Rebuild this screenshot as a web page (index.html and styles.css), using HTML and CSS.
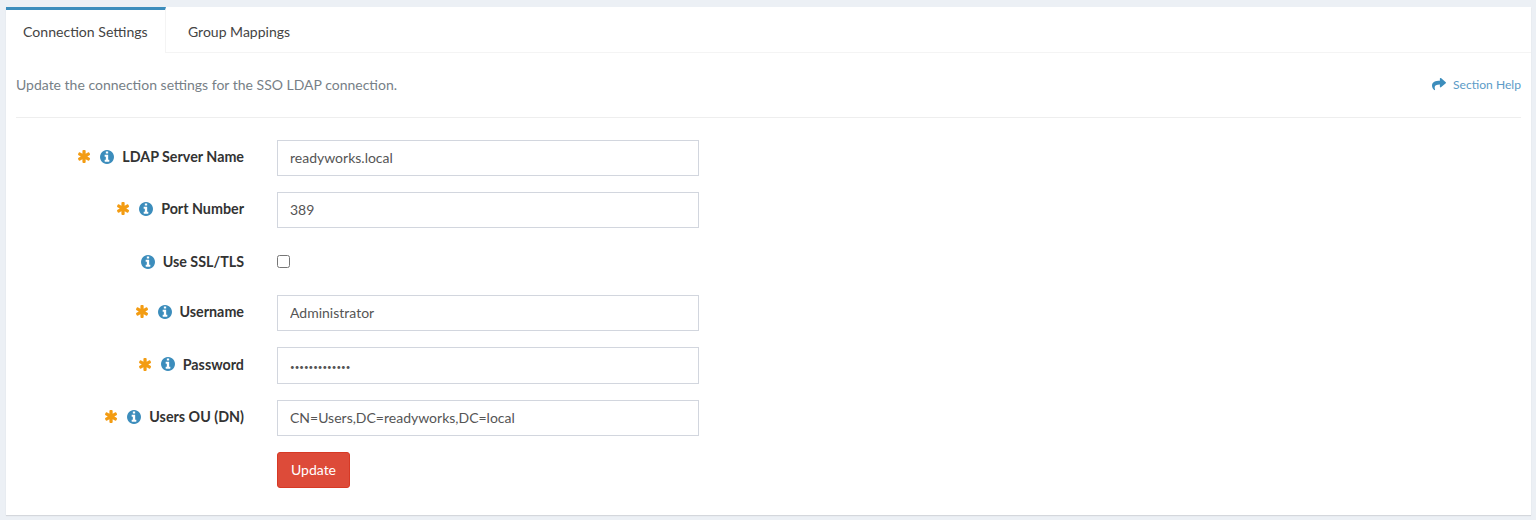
FILE: index.html
```html
<!DOCTYPE html>
<html lang="en">
<head>
<meta charset="utf-8">
<title>SSO LDAP Connection Settings</title>
<link rel="stylesheet" href="styles.css">
</head>
<body>
<svg class="defs" width="0" height="0" aria-hidden="true">
  <symbol id="i-info" viewBox="0 0 1536 1536"><path d="M1024 1248v-160q0-14-9-23t-23-9h-96v-512q0-14-9-23t-23-9h-320q-14 0-23 9t-9 23v160q0 14 9 23t23 9h96v320h-96q-14 0-23 9t-9 23v160q0 14 9 23t23 9h448q14 0 23-9t9-23zm-128-896v-160q0-14-9-23t-23-9h-192q-14 0-23 9t-9 23v160q0 14 9 23t23 9h192q14 0 23-9t9-23zm640 416q0 209-103 385.5t-279.5 279.5-385.5 103-385.5-103-279.5-279.5-103-385.5 103-385.5 279.5-279.5 385.5-103 385.5 103 279.5 279.5 103 385.5z"/></symbol>
  <symbol id="i-star" viewBox="58 122 1548 1548"><path d="M1546 1050q46 26 59.5 77.5t-12.5 97.5l-64 110q-26 46-77.5 59.5t-97.5-12.5l-266-153v307q0 52-38 90t-90 38h-128q-52 0-90-38t-38-90v-307l-266 153q-46 26-97.5 12.5t-77.5-59.5l-64-110q-26-46-12.5-97.5t59.5-77.5l266-154-266-154q-46-26-59.5-77.5t12.5-97.5l64-110q26-46 77.5-59.5t97.5 12.5l266 153v-307q0-52 38-90t90-38h128q52 0 90 38t38 90v307l266-153q46-26 97.5-12.5t77.5 59.5l64 110q26 46 12.5 97.5t-59.5 77.5l-266 154z"/></symbol>
  <symbol id="i-share" viewBox="0 0 512 512"><path d="M503.691 189.836L327.687 37.851C312.281 24.546 288 35.347 288 56.015v80.053C127.371 137.907 0 170.1 0 322.326c0 61.441 39.581 122.309 83.333 154.132 13.653 9.931 33.111-2.533 28.077-18.631C66.066 312.814 132.917 274.316 288 272.085V360c0 20.7 24.3 31.453 39.687 18.164l176.004-152c11.071-9.562 11.086-26.753 0-36.328z"/></symbol>
</svg>
<div class="card">
  <div class="tabs">
    <a class="tab tab-active">Connection Settings</a>
    <a class="tab">Group Mappings</a>
  </div>
  <div class="pane">
    <div class="intro">
      <p class="intro-text">Update the connection settings for the SSO LDAP connection.</p>
      <a class="help"><svg class="icon-share"><use href="#i-share"/></svg><span>Section Help</span></a>
    </div>
    <form class="form">
      <div class="row">
        <label class="label label-up"><svg class="icon-star"><use href="#i-star"/></svg><svg class="icon-info"><use href="#i-info"/></svg><span>LDAP Server Name</span></label>
        <input class="input" type="text" value="readyworks.local">
      </div>
      <div class="row">
        <label class="label label-up"><svg class="icon-star"><use href="#i-star"/></svg><svg class="icon-info"><use href="#i-info"/></svg><span>Port Number</span></label>
        <input class="input" type="text" value="389">
      </div>
      <div class="row row-check">
        <label class="label"><svg class="icon-info"><use href="#i-info"/></svg><span>Use SSL/TLS</span></label>
        <input class="check" type="checkbox">
      </div>
      <div class="row">
        <label class="label label-up"><svg class="icon-star"><use href="#i-star"/></svg><svg class="icon-info"><use href="#i-info"/></svg><span>Username</span></label>
        <input class="input" type="text" value="Administrator">
      </div>
      <div class="row">
        <label class="label label-up"><svg class="icon-star"><use href="#i-star"/></svg><svg class="icon-info"><use href="#i-info"/></svg><span>Password</span></label>
        <input class="input input-pass" type="password" value="readyworks123">
      </div>
      <div class="row">
        <label class="label label-up"><svg class="icon-star"><use href="#i-star"/></svg><svg class="icon-info"><use href="#i-info"/></svg><span>Users OU (DN)</span></label>
        <input class="input" type="text" value="CN=Users,DC=readyworks,DC=local">
      </div>
      <div class="row">
        <span class="label"></span>
        <button class="btn" type="button">Update</button>
      </div>
    </form>
  </div>
</div>
</body>
</html>
```
FILE: styles.css
```css
* { box-sizing: border-box; }
html, body { height: 100%; }
body {
  margin: 0;
  padding: 7px 5px 5px 6px;
  background: #ecf0f5;
  font-family: "Lato", "Noto Sans", sans-serif;
  font-size: 14px;
  color: #333;
  overflow: hidden;
}
.defs { position: absolute; }
.card {
  height: 508px;
  background: #fff;
  box-shadow: 0 1px 1px rgba(0,0,0,.1);
}
.tabs {
  display: flex;
  height: 46px;
  border-bottom: 1px solid #f4f4f4;
}
.tab {
  display: flex;
  align-items: center;
  padding: 3px 17px 0;
  color: #444;
  font-size: 14px;
}
.tab-active {
  width: 160px;
  height: 46px;
  padding: 0 0 0 17px;
  border-top: 3px solid #3c8dbc;
  border-right: 1px solid #f4f4f4;
  background: #fff;
  font-size: 14.1px;
  margin-right: 5px;
}
.pane { padding: 0 10px; }
.intro {
  display: flex;
  align-items: center;
  justify-content: space-between;
  height: 65px;
  border-bottom: 1px solid #eee;
  padding-bottom: 2px;
}
.intro-text { margin: 0; color: #777f87; font-size: 14px; }
.help {
  display: flex;
  align-items: center;
  gap: 7px;
  color: #5b9bc7;
  font-size: 12.1px;
}
.icon-share { width: 14px; height: 14px; fill: #3c8dbc; }
.form {
  display: flex;
  flex-direction: column;
  gap: 16px;
  padding-top: 22px;
}
.row {
  display: flex;
  align-items: center;
  min-height: 36px;
}
.row-check { min-height: 35px; }
.label {
  display: flex;
  align-items: center;
  justify-content: flex-end;
  width: 228px;
  margin-right: 33px;
  font-weight: 700;
  font-size: 14.3px;
  color: #333;
}
.label-up { padding-bottom: 3px; }
.icon-star { width: 13px; height: 13px; fill: #f39c12; margin-right: 10px; }
.icon-info { width: 14px; height: 14px; fill: #3c8dbc; margin-right: 8px; }
.input {
  width: 422px;
  height: 36px;
  padding: 0 12px 2px;
  border: 1px solid #d2d6de;
  background: #fff;
  color: #555;
  font: inherit;
  font-size: 14px;
  border-radius: 0;
  outline: 0;
}
.input-pass { height: 37px; font-size: 8px; padding: 3px 12px 0; }
.check {
  width: 13px;
  height: 13px;
  margin: 0;
}
.btn {
  width: 73px;
  height: 36px;
  padding: 0 0 2px;
  border: 1px solid #d73925;
  border-radius: 3px;
  background: #dd4b39;
  color: #fff;
  font: inherit;
  font-size: 14px;
}
```
